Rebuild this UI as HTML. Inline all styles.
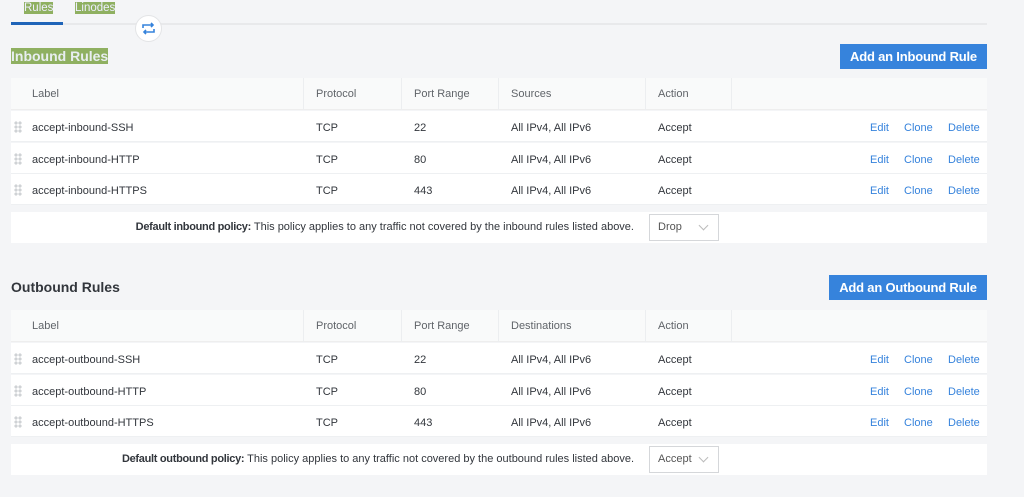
<!DOCTYPE html>
<html><head><style>
*{margin:0;padding:0;box-sizing:border-box}
body{width:1024px;height:497px;background:#f4f5f7;font-family:"Liberation Sans",sans-serif;position:relative;overflow:hidden;color:#32363c}
.a{position:absolute}
.t{font-size:11px;white-space:nowrap}
.hl{background:#8fb061;color:#eef}
.btn{position:absolute;background:#3683dc;color:#fff;font-size:13px;font-weight:bold;text-align:center;line-height:25px;letter-spacing:-0.2px}
.hdr{position:absolute;left:11px;width:976px;height:32px;background:#f9fafa;border-bottom:1px solid #eee}
.row{position:absolute;left:11px;width:976px;height:31px;background:#fff;border-bottom:1px solid #eef0f2}
.sep{position:absolute;top:0;width:1px;height:32px;background:#eceef0}
.c{position:absolute;top:2px;line-height:31px;font-size:11px;white-space:nowrap}
.hdr .c{top:0}
.h{color:#606469}
.lk{color:#3683dc}
.dots{position:absolute;left:3px;top:10px;width:8px;height:12px;background:radial-gradient(circle,#cfd2d5 1.5px,transparent 1.8px) 0 0/4px 4px}
.pol{position:absolute;left:11px;width:976px;height:31px;background:#fff}
.pol .c{top:0}
.pol b{letter-spacing:-0.3px}
.sel{position:absolute;left:638px;top:2px;width:70px;height:27px;border:1px solid #d5d7da;font-size:11px;line-height:25px;padding-left:8px;color:#555}
.sel:after{content:"";position:absolute;right:11px;top:7px;width:6px;height:6px;border-right:1px solid #bbb;border-bottom:1px solid #bbb;transform:rotate(45deg)}
</style></head><body>
<div class="a t hl" style="left:24px;top:2px;font-size:11.5px">Rules</div>
<div class="a t hl" style="left:75px;top:2px;font-size:11.5px">Linodes</div>
<div class="a" style="left:11px;top:23px;width:976px;height:2px;background:#e8e9eb"></div>
<div class="a" style="left:11px;top:22px;width:52px;height:3px;background:#1f64b8"></div>
<div class="a" style="left:135px;top:15px;width:27px;height:27px;border-radius:50%;background:#fff;border:1px solid #e3e4e6"></div>
<svg class="a" style="left:141px;top:21px" width="15" height="15" viewBox="0 0 15 15" fill="none" stroke="#3683dc" stroke-width="1.6"><path d="M2 7V4h10M10 2l2 2-2 2M13 8v3H3M5 13l-2-2 2-2"/></svg>
<div class="a hl" style="left:11px;top:48px;font-size:14px;font-weight:bold;color:#e8eef0">Inbound Rules</div>
<div class="btn" style="left:840px;top:44px;width:147px">Add an Inbound Rule</div>

<div class="hdr" style="top:78px"><div class="sep" style="left:292px"></div><div class="sep" style="left:390px"></div><div class="sep" style="left:487px"></div><div class="sep" style="left:634px"></div><div class="sep" style="left:720px"></div>
<div class="c h" style="left:21px;line-height:32px">Label</div><div class="c h" style="left:305px;line-height:32px">Protocol</div><div class="c h" style="left:403px;line-height:32px">Port Range</div><div class="c h" style="left:500px;line-height:32px">Sources</div><div class="c h" style="left:647px;line-height:32px">Action</div></div>

<div class="row" style="top:111px"><div class="dots"></div><div class="c" style="left:21px">accept-inbound-SSH</div><div class="c" style="left:305px">TCP</div><div class="c" style="left:403px">22</div><div class="c" style="left:500px">All IPv4, All IPv6</div><div class="c" style="left:647px">Accept</div><div class="c lk" style="left:859px">Edit</div><div class="c lk" style="left:893px">Clone</div><div class="c lk" style="left:937px">Delete</div></div>
<div class="row" style="top:143px"><div class="dots"></div><div class="c" style="left:21px">accept-inbound-HTTP</div><div class="c" style="left:305px">TCP</div><div class="c" style="left:403px">80</div><div class="c" style="left:500px">All IPv4, All IPv6</div><div class="c" style="left:647px">Accept</div><div class="c lk" style="left:859px">Edit</div><div class="c lk" style="left:893px">Clone</div><div class="c lk" style="left:937px">Delete</div></div>
<div class="row" style="top:174px"><div class="dots"></div><div class="c" style="left:21px">accept-inbound-HTTPS</div><div class="c" style="left:305px">TCP</div><div class="c" style="left:403px">443</div><div class="c" style="left:500px">All IPv4, All IPv6</div><div class="c" style="left:647px">Accept</div><div class="c lk" style="left:859px">Edit</div><div class="c lk" style="left:893px">Clone</div><div class="c lk" style="left:937px">Delete</div></div>

<div class="pol" style="top:212px"><div class="c" style="right:353px;left:auto"><b>Default inbound policy:</b> This policy applies to any traffic not covered by the inbound rules listed above.</div><div class="sel">Drop</div></div>

<div class="a" style="left:11px;top:279px;font-size:14px;font-weight:bold;color:#32363c">Outbound Rules</div>
<div class="btn" style="left:829px;top:275px;width:158px">Add an Outbound Rule</div>

<div class="hdr" style="top:310px"><div class="sep" style="left:292px"></div><div class="sep" style="left:390px"></div><div class="sep" style="left:487px"></div><div class="sep" style="left:634px"></div><div class="sep" style="left:720px"></div>
<div class="c h" style="left:21px;line-height:32px">Label</div><div class="c h" style="left:305px;line-height:32px">Protocol</div><div class="c h" style="left:403px;line-height:32px">Port Range</div><div class="c h" style="left:500px;line-height:32px">Destinations</div><div class="c h" style="left:647px;line-height:32px">Action</div></div>

<div class="row" style="top:343px"><div class="dots"></div><div class="c" style="left:21px">accept-outbound-SSH</div><div class="c" style="left:305px">TCP</div><div class="c" style="left:403px">22</div><div class="c" style="left:500px">All IPv4, All IPv6</div><div class="c" style="left:647px">Accept</div><div class="c lk" style="left:859px">Edit</div><div class="c lk" style="left:893px">Clone</div><div class="c lk" style="left:937px">Delete</div></div>
<div class="row" style="top:375px"><div class="dots"></div><div class="c" style="left:21px">accept-outbound-HTTP</div><div class="c" style="left:305px">TCP</div><div class="c" style="left:403px">80</div><div class="c" style="left:500px">All IPv4, All IPv6</div><div class="c" style="left:647px">Accept</div><div class="c lk" style="left:859px">Edit</div><div class="c lk" style="left:893px">Clone</div><div class="c lk" style="left:937px">Delete</div></div>
<div class="row" style="top:406px"><div class="dots"></div><div class="c" style="left:21px">accept-outbound-HTTPS</div><div class="c" style="left:305px">TCP</div><div class="c" style="left:403px">443</div><div class="c" style="left:500px">All IPv4, All IPv6</div><div class="c" style="left:647px">Accept</div><div class="c lk" style="left:859px">Edit</div><div class="c lk" style="left:893px">Clone</div><div class="c lk" style="left:937px">Delete</div></div>

<div class="pol" style="top:444px"><div class="c" style="right:353px;left:auto"><b>Default outbound policy:</b> This policy applies to any traffic not covered by the outbound rules listed above.</div><div class="sel">Accept</div></div>
</body></html>
